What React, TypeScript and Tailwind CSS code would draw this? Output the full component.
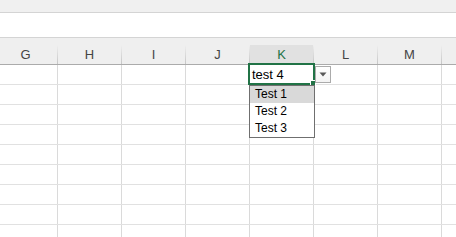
import React from 'react';

const columns = ['G', 'H', 'I', 'J', 'K', 'L', 'M', ''];
const rows = Array.from({ length: 9 }, (_, i) => i);
const options = ['Test 1', 'Test 2', 'Test 3'];

export default function App() {
  return (
    <div className="relative h-[237px] w-[456px] overflow-hidden bg-white font-['Liberation_Sans',Arial,sans-serif]">
      {/* ribbon edge */}
      <div className="h-[13px] border-b border-[#d4d4d4] bg-[#f0f0f0]" />
      {/* formula bar */}
      <div className="h-[25px] border-b border-[#d4d4d4] bg-white" />

      {/* column headers */}
      <div className="h-[27px] border-b border-[#ababab] bg-[#efefef] pt-[7px]">
        <div className="-ml-[6px] flex h-[19px]">
          {columns.map((col, i) => (
            <div
              key={i}
              className={`flex w-[64px] shrink-0 ${col === 'K' ? 'bg-[#e1e1e1]' : ''}`}
            >
              <div
                className={`flex-1 text-center text-[13px] leading-[19px] ${
                  col === 'K' ? 'text-[#217346]' : 'text-[#444444]'
                }`}
              >
                {col}
              </div>
              <div className="w-px bg-gradient-to-b from-[#efefef] to-[#c6c6c6]" />
            </div>
          ))}
        </div>
      </div>

      {/* cells */}
      <div className="-ml-[6px]">
        {rows.map(r => (
          <div key={r} className="flex h-[20px] border-b border-[#e1e1e1]">
            {columns.map((col, i) => (
              <div key={i} className="w-[64px] shrink-0 border-r border-[#dadada]" />
            ))}
          </div>
        ))}
      </div>

      {/* active cell */}
      <div className="absolute left-[248px] top-[63px] flex h-[22px] w-[67px] items-end border-2 border-[#217346] bg-white pb-[1px] pl-[2px]">
        <span className="text-[13px] leading-[15px] text-black">test 4</span>
        <div className="absolute -bottom-[3px] -right-[3px] h-[6px] w-[6px] border border-white bg-[#217346]" />
      </div>

      {/* dropdown button */}
      <div className="absolute left-[315px] top-[66px] flex h-[17px] w-[16px] items-center justify-center border border-[#ababab] bg-gradient-to-b from-white to-[#f3f3f3]">
        <svg width="8" height="5" viewBox="0 0 8 5">
          <path d="M0.5 0.5 H7.5 L4 4.5 Z" fill="#595959" />
        </svg>
      </div>

      {/* validation list */}
      <div className="absolute left-[249px] top-[85px] w-[66px] border border-[#6f6f6f] bg-white">
        {options.map((opt, i) => (
          <div
            key={opt}
            className={`h-[17px] pl-[5px] text-[12px] leading-[17px] text-black font-['Liberation_Sans_Narrow','Liberation_Sans',Arial,sans-serif] ${
              i === 0 ? 'bg-[#d9d9d9]' : ''
            }`}
          >
            {opt}
          </div>
        ))}
      </div>
    </div>
  );
}
